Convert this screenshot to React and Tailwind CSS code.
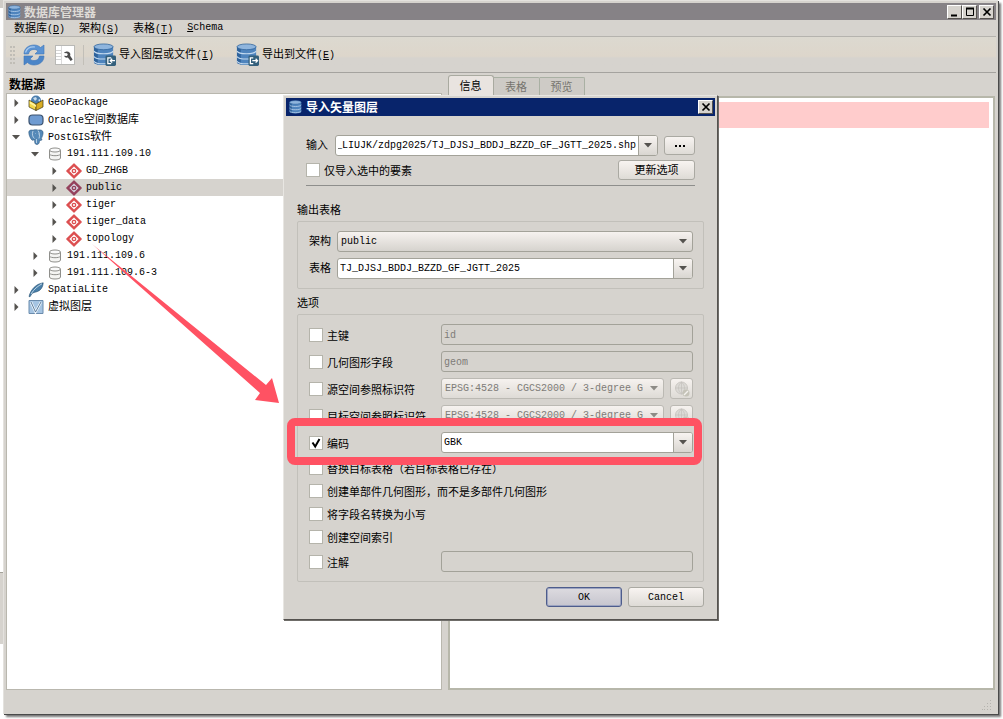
import React, { useEffect, useRef, useState } from "react";

const TREE = [
  { id: "gpkg", depth: 0, en: "GeoPackage", icon: "geopackage" },
  { id: "oracle", depth: 0, en: "Oracle", cn: "空间数据库", icon: "oracle" },
  { id: "postgis", depth: 0, en: "PostGIS", cn: "软件", icon: "postgis", open: true },
  { id: "c10", depth: 1, en: "191.111.109.10", icon: "db", open: true },
  { id: "zhgb", depth: 2, en: "GD_ZHGB", icon: "schema" },
  { id: "public", depth: 2, en: "public", icon: "schema" },
  { id: "tiger", depth: 2, en: "tiger", icon: "schema" },
  { id: "tiger_data", depth: 2, en: "tiger_data", icon: "schema" },
  { id: "topology", depth: 2, en: "topology", icon: "schema" },
  { id: "c6", depth: 1, en: "191.111.109.6", icon: "db" },
  { id: "c63", depth: 1, en: "191.111.109.6-3", icon: "db" },
  { id: "spatialite", depth: 0, en: "SpatiaLite", icon: "feather" },
  { id: "virtual", depth: 0, en: "", cn: "虚拟图层", icon: "virtual" },
];

const INDENT = ["pl-[5px]", "pl-[24px]", "pl-[43px]"];

const FLAGS = [
  "替换目标表格（若目标表格已存在）",
  "创建单部件几何图形，而不是多部件几何图形",
  "将字段名转换为小写",
  "创建空间索引",
];

const CRS = "EPSG:4528 - CGCS2000 / 3-degree Gauss-Kruger zone 40";

const BTN =
  "rounded-[3px] border border-[#aaa9a2] bg-gradient-to-b from-[#f8f4f1] to-[#dedbd6] text-black";
const FIELD = "h-[21px] w-full min-w-0 rounded-[3px] border border-[#a3a299]";
const TITLE = "font-['Noto_Sans_CJK_SC',sans-serif] text-[12px] font-bold";

function Cn({ children }) {
  return (
    <span className="font-['Noto_Sans_CJK_SC',sans-serif] text-[11px]">{children}</span>
  );
}

function Database({ className, badge }) {
  return (
    <svg viewBox="0 0 24 24" className={className} aria-hidden="true">
      <path d="M1 4v16c0 1.700 4.500 3 10 3s10-1.300 10-3V4z" fill="#4f84bd" />
      <path d="M1 4v16c0 1 1.500 1.900 4 2.400V4z" fill="#2f639c" />
      <ellipse cx="11" cy="4" rx="10" ry="3" fill="#8fb5dd" stroke="#2f639c" strokeWidth=".8" />
      <path d="M1 8.500c2 3.600 18 3.600 20 0M1 14c2 3.600 18 3.600 20 0M1 19c2 3.600 18 3.600 20 0" fill="none" stroke="#c4daf0" strokeWidth="1.200" />
      {badge && (
        <g>
          <rect x="13" y="13" width="11" height="11" rx="1.500" fill="#34607c" />
          {badge === "in" ? (
            <path d="M19 15.500h-3.500v6H19M23 18.500h-5m2-2-2 2 2 2" fill="none" stroke="#fff" strokeWidth="1.300" />
          ) : (
            <path d="M18 15.500h-3v6h3M17 18.500h5.500m-2-2 2 2-2 2" fill="none" stroke="#fff" strokeWidth="1.300" />
          )}
        </g>
      )}
    </svg>
  );
}

function Refresh() {
  return (
    <svg viewBox="0 0 22 22" className="size-[22px]" aria-hidden="true">
      <path d="M1 10C1 4 6 1 11 1c3 0 5 1 6.500 2.500L21 1v9h-9l3-3c-1-1-2.500-1.600-4-1.600C8 5.400 6 7 5.500 10z" fill="#5b93d3" stroke="#3e76b8" strokeWidth=".6" />
      <path d="M21 12c0 6-5 9-10 9-3 0-5-1-6.500-2.500L1 21v-9h9l-3 3c1 1 2.500 1.600 4 1.600 3 0 5-1.600 5.500-4.600z" fill="#4b85c8" stroke="#3e76b8" strokeWidth=".6" />
      <path d="M2.500 8.500C4 4 8 2.600 12 3" fill="none" stroke="#a9cbef" strokeWidth="1.200" />
    </svg>
  );
}

function SqlWindow() {
  return (
    <svg viewBox="0 0 20 22" className="h-[22px] w-5" aria-hidden="true">
      <rect x=".5" y="1.500" width="19" height="19" fill="#fff" stroke="#b9b9b6" />
      <path d="M1 6.500h5M1 9.500h5M1 12.500h5M1 15.500h5" stroke="#d4d4d4" />
      <path d="M6.500 2v18" stroke="#dadada" />
      <path d="M9 9c1-1.500 4-2 5.500-.5 1 1 1 2.200.6 3.300l2.600 3.700-2 1.600-2.900-3.500c-1.700.4-3.300-.4-3.700-1.900l2.700.4 1-1.300-.7-1.600z" fill="#4c4c4c" />
    </svg>
  );
}

function TreeIcon({ name }) {
  const cls = "size-4 shrink-0";
  switch (name) {
    case "geopackage":
      return (
        <svg viewBox="0 0 16 16" className={cls} aria-hidden="true">
          <circle cx="8" cy="5.500" r="5" fill="#4d7fae" />
          <path d="M5 3l3-1 1 2-2 2zM10 5l2-1v3z" fill="#c8dced" />
          <path d="M1 5l7 4v6.500L1 12z" fill="#f5d94b" stroke="#3c3413" strokeWidth=".7" />
          <path d="M15 5L8 9v6.500l7-3.500z" fill="#d9ad24" stroke="#3c3413" strokeWidth=".7" />
          <path d="M1.800 6.500L8 10v2L1.800 8.500z" fill="#fff3a1" />
        </svg>
      );
    case "oracle":
      return (
        <svg viewBox="0 0 16 16" className={cls} aria-hidden="true">
          <rect x="1" y="3" width="14" height="10" rx="3.500" fill="#6f9bd1" stroke="#3c536f" strokeWidth="1.200" />
        </svg>
      );
    case "postgis":
      return (
        <svg viewBox="0 0 16 16" className={cls} aria-hidden="true">
          <path d="M.8 3C1 1.200 3 .8 5 1.200c1.600-.6 3.700-.6 5 0 2-.6 4.500-.3 5 1.800.4 2.200-.8 5-2 7l1.200.5c-.7.900-1.700 1.100-2.700 1-.1 1.800-.3 3.500-2 3.900-1.800.4-2.700-.6-2.800-2.400L6.500 10c-.6 1-1.600 1.700-2.600 1C2.300 9.600.7 5.800.8 3z" fill="#5589b8" stroke="#2e587e" strokeWidth=".6" />
          <path d="M5 2C3.800 5 4.500 8 6.500 9.500M10 1.500c1.500 2 2 5 1 8M7 4.500h.5M10 5h.6M8.500 10v4" fill="none" stroke="#cfe0ee" strokeWidth=".8" />
        </svg>
      );
    case "db":
      return (
        <svg viewBox="0 0 16 16" className={cls} aria-hidden="true">
          <path d="M2.500 4v8c0 1.300 2.500 2 5.500 2s5.500-.7 5.500-2V4" fill="#f4f4f2" stroke="#8f8f8b" />
          <ellipse cx="8" cy="4" rx="5.500" ry="2" fill="#fafafa" stroke="#8f8f8b" />
          <path d="M2.500 8.200c1 2 10 2 11 0" fill="none" stroke="#8f8f8b" />
        </svg>
      );
    case "schema":
    case "schema-selected": {
      const color = name === "schema" ? "#dc4f50" : "#94415c";
      const inner = name === "schema" ? "#fff" : "#d5d3e0";
      return (
        <svg viewBox="0 0 16 16" className={cls} aria-hidden="true">
          <path d="M8 .8L15.200 8 8 15.200.8 8z" fill={color} stroke={color} strokeWidth="1.200" strokeLinejoin="round" />
          <path d="M8 3.400L12.600 8 8 12.600 3.400 8z" fill={inner} />
          <circle cx="8" cy="8" r="1.700" fill={inner} stroke={color} strokeWidth="1.300" />
        </svg>
      );
    }
    case "feather":
      return (
        <svg viewBox="0 0 16 16" className={cls} aria-hidden="true">
          <path d="M1 14.500C3 7 8 2 15.200.8c-.2 4-2.200 7.500-5.700 8.700-2.300.8-4.500 1-5.500 2l-2 3.300z" fill="#4a7fa9" stroke="#234e6f" strokeWidth=".6" />
          <path d="M3 12C6 7 10 4 14 1.800" fill="none" stroke="#c6dcea" strokeWidth=".9" />
        </svg>
      );
    default:
      return (
        <svg viewBox="0 0 16 16" className={cls} aria-hidden="true">
          <path d="M1 1.500h14v13H1z" fill="#a5c4e2" stroke="#6b8cad" />
          <path d="M3 3l4.500 10L13 3" fill="none" stroke="#f2f7fb" strokeWidth="2.400" />
          <path d="M3 3l4.500 10L13 3" fill="none" stroke="#4c6f92" strokeWidth=".9" />
        </svg>
      );
  }
}

function Caret({ className = "fill-[#55534f]" }) {
  return (
    <svg viewBox="0 0 8 5" className={`h-[5px] w-2 ${className}`} aria-hidden="true">
      <path d="M0 0h8L4 4.500z" />
    </svg>
  );
}

function Globe() {
  return (
    <svg viewBox="0 0 16 16" className="size-4" aria-hidden="true">
      <circle cx="7.500" cy="7" r="6" fill="#dcdad6" stroke="#cbc8c3" />
      <path d="M1.500 7h12M7.500 1v12M7.500 1c-4 3-4 9 0 12M7.500 1c4 3 4 9 0 12" fill="none" stroke="#c3c0bb" strokeWidth=".7" />
      <circle cx="12" cy="12" r="3.500" fill="#c5c3b8" />
      <path d="M10 14l4-4" stroke="#f4f2ee" strokeWidth="1.400" />
    </svg>
  );
}

function CheckBox({ children, defaultChecked, className = "" }) {
  return (
    <label className={`flex shrink-0 items-center gap-1 whitespace-nowrap ${className}`}>
      <span className="relative flex size-[14px]">
        <input
          type="checkbox"
          defaultChecked={defaultChecked}
          className="peer size-[14px] appearance-none border border-[#b5b4ab] bg-white"
        />
        <svg
          viewBox="0 0 14 14"
          className="pointer-events-none absolute inset-0 hidden peer-checked:block"
          aria-hidden="true"
        >
          <path d="M3.500 6.500l2.700 4L10.500 3" fill="none" stroke="#000" strokeWidth="2" />
        </svg>
      </span>
      <Cn>{children}</Cn>
    </label>
  );
}

function Combo({ id, value, label, scrollEnd }) {
  const ref = useRef(null);
  useEffect(() => {
    if (scrollEnd) ref.current.scrollLeft = ref.current.scrollWidth;
  }, [scrollEnd]);

  return (
    <div className={`${FIELD} flex flex-1 overflow-hidden bg-white`}>
      <input
        id={id}
        ref={ref}
        type="text"
        aria-label={label}
        defaultValue={value}
        className="w-0 flex-1 bg-transparent px-[2px] pt-px outline-none"
      />
      <button
        type="button"
        aria-label="展开"
        className="flex w-[19px] items-center justify-center border-l border-[#a3a299] bg-gradient-to-b from-[#f8f4f1] to-[#d9d6d1]"
      >
        <Caret />
      </button>
    </div>
  );
}

function Select({ id, options, label, disabled }) {
  return (
    <div className="relative flex min-w-0 flex-1 items-center">
      <select
        id={id}
        aria-label={label}
        disabled={disabled}
        className={`${FIELD} appearance-none bg-gradient-to-b from-[#f6f2ef] to-[#d6d3ce] pt-px pr-5 pl-[3px] text-black opacity-100 disabled:border-[#bbb9b3] disabled:to-[#dedbd6] disabled:text-[#7e7c78]`}
      >
        {options.map((o) => (
          <option key={o}>{o}</option>
        ))}
      </select>
      <span className="pointer-events-none absolute right-[6px]">
        <Caret className={disabled ? "fill-[#8d8b86]" : "fill-[#55534f]"} />
      </span>
    </div>
  );
}

function OptionRow({ label, checked, children }) {
  return (
    <div className="flex h-[21px] items-center">
      <CheckBox defaultChecked={checked} className="w-[132px]">
        {label}
      </CheckBox>
      <div className="flex min-w-0 flex-1 gap-[6px]">{children}</div>
    </div>
  );
}

function DisabledField({ label, value = "" }) {
  return (
    <input
      type="text"
      disabled
      aria-label={label}
      defaultValue={value}
      className={`${FIELD} bg-transparent px-[2px] pt-px text-[#7e7c78]`}
    />
  );
}

function CrsPicker({ label }) {
  return (
    <>
      <Select label={label} options={[CRS]} disabled />
      <button
        type="button"
        disabled
        aria-label="选择坐标系"
        className="flex h-[21px] w-[23px] items-center justify-center rounded-[3px] border border-[#bbb9b3] bg-gradient-to-b from-[#f6f2ef] to-[#dedbd6]"
      >
        <Globe />
      </button>
    </>
  );
}

function WindowButton({ kind, label }) {
  return (
    <button
      type="button"
      aria-label={label}
      className="flex h-[14px] w-[15px] items-center justify-center border border-t-white border-l-white border-r-[#55524f] border-b-[#55524f] bg-[#d6d3ce]"
    >
      <svg viewBox="0 0 10 10" className="size-[10px]" fill="none" stroke="#000" aria-hidden="true">
        {kind === "min" && <path d="M1 8.500h6" strokeWidth="2" />}
        {kind === "max" && (
          <>
            <path d="M1 1.500h8" strokeWidth="2" />
            <path d="M1.500 1v7.500h7V1" />
          </>
        )}
        {kind === "close" && <path d="M1.500 1.500l7 7M8.500 1.500l-7 7" strokeWidth="1.700" />}
      </svg>
    </button>
  );
}

function ImportDialog() {
  return (
    <div
      role="dialog"
      aria-label="导入矢量图层"
      className="absolute top-[95px] left-[283px] w-[435px] border border-t-[#e8e6e2] border-l-[#e8e6e2] border-r-[#55524f] border-b-[#55524f] bg-[#d6d3ce] p-[2px] pb-3 shadow-[1px_1px_0_#6f6d69]"
    >
      <div className="flex h-[18px] items-center gap-[3px] bg-[#08246b] pr-[2px] pl-[3px] text-white">
        <Database className="size-[14px]" />
        <span className={`flex-1 ${TITLE}`}>导入矢量图层</span>
        <WindowButton kind="close" label="关闭" />
      </div>

      <div className="px-[11px] pt-[19px]">
        <div className="px-[9px]">
          <div className="flex h-[21px] items-center">
            <label htmlFor="src" className="mr-[7px]">
              <Cn>输入</Cn>
            </label>
            <Combo
              id="src"
              value="E:/L_LIUJK/zdpg2025/TJ_DJSJ_BDDJ_BZZD_GF_JGTT_2025.shp"
              scrollEnd
            />
            <button type="button" aria-label="浏览" className={`${BTN} ml-[6px] flex h-[19px] w-[31px] items-center justify-center gap-[2px]`}>
              <i className="size-[2px] bg-black" />
              <i className="size-[2px] bg-black" />
              <i className="size-[2px] bg-black" />
            </button>
          </div>
          <div className="mt-1 flex items-center justify-between border-b border-[#8e8e8c] pb-[5px]">
            <CheckBox>仅导入选中的要素</CheckBox>
            <button type="button" className={`${BTN} h-5 w-[77px]`}>
              <Cn>更新选项</Cn>
            </button>
          </div>
        </div>

        <fieldset className="mt-4">
          <legend className="h-[19px]">
            <Cn>输出表格</Cn>
          </legend>
          <div className="flex flex-col gap-[6px] rounded-[2px] border border-[#c2c0ba] py-[9px] pr-[10px] pl-[11px]">
            <div className="flex items-center">
              <label htmlFor="schema" className="w-7">
                <Cn>架构</Cn>
              </label>
              <Select id="schema" options={["public"]} />
            </div>
            <div className="flex items-center">
              <label htmlFor="table" className="w-7">
                <Cn>表格</Cn>
              </label>
              <Combo id="table" value="TJ_DJSJ_BDDJ_BZZD_GF_JGTT_2025" />
            </div>
          </div>
        </fieldset>

        <fieldset className="mt-[6px]">
          <legend className="h-[19px]">
            <Cn>选项</Cn>
          </legend>
          <div className="flex flex-col gap-[6px] rounded-[2px] border border-[#c2c0ba] py-[9px] pr-[10px] pl-[11px]">
            <OptionRow label="主键">
              <DisabledField label="主键字段" value="id" />
            </OptionRow>
            <OptionRow label="几何图形字段">
              <DisabledField label="几何字段名" value="geom" />
            </OptionRow>
            <OptionRow label="源空间参照标识符">
              <CrsPicker label="源坐标系" />
            </OptionRow>
            <OptionRow label="目标空间参照标识符">
              <CrsPicker label="目标坐标系" />
            </OptionRow>
            <div className="relative z-10">
              <OptionRow label="编码" checked>
                <Combo label="编码名称" value="GBK" />
              </OptionRow>
              <div className="pointer-events-none absolute -top-[14px] -right-[9px] -bottom-[12px] -left-[22px] rounded-[8px] border-8 border-[#ff5263]" />
            </div>
            {FLAGS.map((flag) => (
              <CheckBox key={flag} className="h-[17px]">
                {flag}
              </CheckBox>
            ))}
            <OptionRow label="注解">
              <DisabledField label="注解内容" />
            </OptionRow>
          </div>
        </fieldset>

        <div className="mt-[5px] flex justify-end gap-[6px]">
          <button
            type="button"
            className="h-5 w-[76px] rounded-[3px] border border-[#4d5c8c] bg-gradient-to-b from-[#dddbe0] to-[#c6c5ce] pt-px shadow-[inset_0_0_0_1px_#9ba3c0]"
          >
            OK
          </button>
          <button type="button" className={`${BTN} h-5 w-[76px] pt-px`}>
            Cancel
          </button>
        </div>
      </div>
    </div>
  );
}

export default function App() {
  const [selected, setSelected] = useState("public");

  return (
    <div className="relative flex min-h-screen bg-white pr-[5px] pb-[5px] font-['Liberation_Mono','Noto_Sans_CJK_SC',monospace] text-[10px] leading-[14px] text-black">
      {/* sliver of the window behind */}
      <div className="flex w-[3px] flex-col">
        <div className="h-2 bg-[#cfccc7]" />
        <div className="flex-1" />
        <div className="mb-[70px] h-[72px] border-t border-[#a3a299] bg-[#d6d3ce]" />
      </div>

      <div className="flex flex-1 flex-col border-t border-l border-[#e4e2de] bg-[#d6d3ce] px-[2px] pt-[2px] shadow-[1px_1px_0_#4a4a4a,3px_3px_2px_#777]">
        <div className="flex h-[17px] items-center gap-[2px] bg-[#868286] px-[2px] text-[#dedbd6]">
          <Database className="size-[14px]" />
          <h1 className={`flex-1 ${TITLE}`}>数据库管理器</h1>
          <div className="flex">
            <WindowButton kind="min" label="最小化" />
            <WindowButton kind="max" label="最大化" />
            <span className="w-[2px]" />
            <WindowButton kind="close" label="关闭" />
          </div>
        </div>

        <nav className="flex h-[17px] items-center gap-[14px] border-b border-[#b5b3ae] px-2">
          <button type="button"><Cn>数据库</Cn>(<u>D</u>)</button>
          <button type="button"><Cn>架构</Cn>(<u>S</u>)</button>
          <button type="button"><Cn>表格</Cn>(<u>T</u>)</button>
          <button type="button"><u>S</u>chema</button>
        </nav>

        <div className="flex h-9 items-center border-b border-[#a5a39f] bg-gradient-to-b from-[#dcd9d0] via-[#ddd6cb] via-55% to-[#d6d3ce] to-60% pl-1">
          <div className="mr-2 h-[18px] w-[5px] border-x-2 border-dotted border-[#c0bdb6]" />
          <button type="button" aria-label="刷新">
            <Refresh />
          </button>
          <button type="button" aria-label="SQL 窗口" className="ml-[10px]">
            <SqlWindow />
          </button>
          <span className="mr-[9px] ml-2 h-5 w-px bg-[#c2bfb8]" />
          <button type="button" className="flex items-center gap-[3px]">
            <Database className="size-[23px]" badge="in" />
            <span><Cn>导入图层或文件</Cn>(<u>I</u>)</span>
          </button>
          <button type="button" className="ml-[22px] flex items-center gap-[3px]">
            <Database className="size-[23px]" badge="out" />
            <span><Cn>导出到文件</Cn>(<u>E</u>)</span>
          </button>
        </div>

        <div className="grid flex-1 grid-cols-[436fr_548fr] gap-[6px] pr-px">
          <section className="flex flex-col">
            <h2 className={`flex h-5 items-center pt-[2px] pl-[3px] ${TITLE}`}>数据源</h2>
            <ul className="flex-1 border border-[#b9b7ae] bg-white" role="tree">
              {TREE.map((node) => (
                <li
                  key={node.id}
                  role="treeitem"
                  aria-selected={node.id === selected}
                  onClick={() => setSelected(node.id)}
                  className={`flex h-[17px] items-center ${INDENT[node.depth]} ${
                    node.id === selected ? "bg-[#d6d3ce]" : ""
                  }`}
                >
                  <svg viewBox="0 0 8 8" className="mr-2 size-2 shrink-0 fill-[#55534f]" aria-hidden="true">
                    {node.open ? <path d="M0 2h8L4 6.500z" /> : <path d="M2.500 0v8L6.500 4z" />}
                  </svg>
                  <TreeIcon
                    name={node.icon === "schema" && node.id === selected ? "schema-selected" : node.icon}
                  />
                  <span className="pl-1 whitespace-nowrap">
                    {node.en}
                    {node.cn && <Cn>{node.cn}</Cn>}
                  </span>
                </li>
              ))}
            </ul>
          </section>

          <section className="flex flex-col pt-[2px]">
            <div className="flex h-[21px] items-end" role="tablist">
              <button type="button" role="tab" aria-selected="true" className="h-[21px] w-[46px] rounded-t-[3px] border border-b-0 border-[#a9aaa0] bg-[#e9e4e0]">
                <Cn>信息</Cn>
              </button>
              <button type="button" role="tab" className="h-[19px] w-[46px] rounded-tr-[2px] border border-b-0 border-l-0 border-[#a9b0a3] bg-[#cecbc6] text-[#77756f]">
                <Cn>表格</Cn>
              </button>
              <button type="button" role="tab" className="h-[19px] w-[45px] rounded-tr-[2px] border border-b-0 border-l-0 border-[#a9b0a3] bg-[#cecbc6] text-[#77756f]">
                <Cn>预览</Cn>
              </button>
            </div>
            <div className="flex-1 border-2 border-[#b7b7aa] bg-white px-1 pt-1">
              <div className="h-[26px] bg-[#ffcccc]" />
            </div>
          </section>
        </div>

        <footer className="flex h-6 items-end justify-end p-1">
          <svg viewBox="0 0 10 10" className="size-[10px] fill-[#b5b3ae]" aria-hidden="true">
            <path d="M8 0h1v1H8zM5 3h1v1H5zM8 3h1v1H8zM2 6h1v1H2zM5 6h1v1H5zM8 6h1v1H8zM0 9h1v1H0zM2 9h1v1H2zM5 9h1v1H5zM8 9h1v1H8z" />
          </svg>
        </footer>
      </div>

      <ImportDialog />

      <svg
        viewBox="0 0 200 170"
        className="pointer-events-none absolute top-[240px] left-[88px] h-[170px] w-[200px] fill-[#ff5263]"
        aria-hidden="true"
      >
        <path d="M4 4L178 145L184 138L191 163L167 160L172 153Z" />
      </svg>
    </div>
  );
}
